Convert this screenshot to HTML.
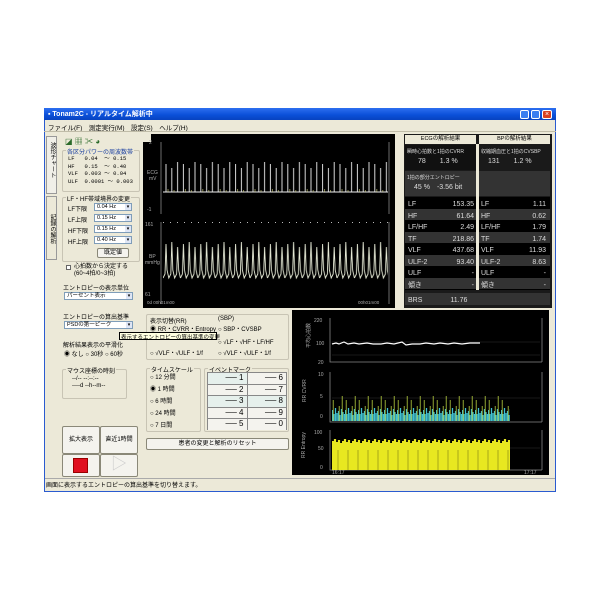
<!DOCTYPE html>
<html><head><meta charset="utf-8"><style>
*{margin:0;padding:0;box-sizing:border-box}
body{width:600px;height:600px;background:#fff;position:relative;overflow:hidden;font-family:"Liberation Sans","Noto Sans CJK JP",sans-serif;font-size:6px;color:#000}
.a{position:absolute}
.g{position:absolute;border:1px solid #c8c4b4;border-radius:2px}
.gt{position:absolute;top:-4px;left:3px;background:#ece9d8;padding:0 1px;font-size:6px;color:#1a3fa0;white-space:nowrap}
.sel{position:absolute;background:#fff;border:1px solid #7f9db9;height:8px;font-size:5.5px;line-height:7px;padding-left:2px}
.sel:after{content:"▾";position:absolute;right:0;top:0;width:6px;height:6px;background:#dfe6f5;font-size:5px;line-height:6px;text-align:center}
.btn{position:absolute;background:#f4f3ee;border:1px solid #8a8878;border-radius:2px;text-align:center;font-size:6px}
.t{position:absolute;white-space:nowrap;font-size:6px}
.r{color:#ddd;font-size:7px;position:absolute;white-space:nowrap}
.ev div{text-align:right;padding-right:3px;font-size:8px;line-height:10.5px}
</style></head><body>
<div class="a" style="left:44px;top:108px;width:512px;height:384px;background:#ece9d8;border:1px solid #2a5bd0"></div>
<div class="a" style="left:44px;top:108px;width:512px;height:12px;background:linear-gradient(#2e6ff0,#0a4fd8 60%,#0842c0)"></div>
<div class="t" style="left:48px;top:109px;color:#fff;font-weight:bold;font-size:7px">▪ Tonam2C - リアルタイム解析中</div>
<div class="a" style="left:520px;top:110px;width:9px;height:9px;background:#3a7ef0;border:1px solid #fff;border-radius:2px"></div>
<div class="a" style="left:531px;top:110px;width:9px;height:9px;background:#3a7ef0;border:1px solid #fff;border-radius:2px"></div>
<div class="a" style="left:542px;top:110px;width:10px;height:9px;background:#d84020;border:1px solid #fff;border-radius:2px;color:#fff;font-size:7px;line-height:7px;text-align:center">×</div>
<div class="t" style="left:48px;top:122px;font-size:6.5px">ファイル(F)　測定実行(M)　設定(S)　ヘルプ(H)</div>
<div class="a" style="left:44px;top:131px;width:512px;height:1px;background:#c0bca8"></div>
<div class="a" style="left:46px;top:136px;width:11px;height:58px;border:1px solid #999;background:#f0efe8"></div>
<div class="t" style="left:48px;top:142px;writing-mode:vertical-rl;font-size:6px">波形チャート</div>
<div class="a" style="left:46px;top:196px;width:11px;height:64px;border:1px solid #999;background:#ece9d8"></div>
<div class="t" style="left:48px;top:214px;writing-mode:vertical-rl;font-size:6px">記録の解析</div>
<div class="t" style="left:65px;top:136px;font-size:8px;color:#2a6a2a">◪ ▦ ✂ ◕</div>
<div class="g" style="left:62px;top:150px;width:78px;height:42px"><span class="gt">各区分パワーの周波数帯</span></div>
<div class="t" style="left:68px;top:155px;line-height:7.5px;font-family:'Liberation Mono',monospace;font-size:5.5px">LF&nbsp;&nbsp; 0.04&nbsp; ～ 0.15<br>HF&nbsp;&nbsp; 0.15&nbsp; ～ 0.40<br>VLF&nbsp; 0.003 ～ 0.04<br>ULF&nbsp; 0.0001 ～ 0.003</div>
<div class="g" style="left:62px;top:197px;width:78px;height:65px"><span class="gt" style="color:#000">LF・HF帯域境界の変更</span></div>
<div class="t" style="left:68px;top:204px">LF下限</div><div class="sel" style="left:94px;top:203px;width:38px">0.04 Hz</div>
<div class="t" style="left:68px;top:215px">LF上限</div><div class="sel" style="left:94px;top:214px;width:38px">0.15 Hz</div>
<div class="t" style="left:68px;top:226px">HF下限</div><div class="sel" style="left:94px;top:225px;width:38px">0.15 Hz</div>
<div class="t" style="left:68px;top:237px">HF上限</div><div class="sel" style="left:94px;top:236px;width:38px">0.40 Hz</div>
<div class="btn" style="left:97px;top:248px;width:32px;height:10px;line-height:8px">既定値</div>
<div class="a" style="left:66px;top:265px;width:5px;height:5px;border:1px solid #666;background:#fff"></div>
<div class="t" style="left:74px;top:264px;line-height:7px">心拍数から決定する<br>(60~4拍/0~3拍)</div>
<div class="t" style="left:63px;top:283px">エントロピーの表示単位</div>
<div class="sel" style="left:64px;top:292px;width:69px">パーセント表示</div>
<div class="t" style="left:63px;top:312px">エントロピーの算出基準</div>
<div class="sel" style="left:64px;top:321px;width:69px">PSDの第一ピーク</div>
<div class="t" style="left:63px;top:340px">解析結果表示の平滑化</div>
<div class="t" style="left:64px;top:349px">◉ なし ○ 30秒 ○ 60秒</div>
<div class="g" style="left:62px;top:369px;width:65px;height:30px"><span class="gt" style="color:#000">マウス座標の時刻</span></div>
<div class="t" style="left:72px;top:376px;line-height:7px">--/-- --:--:--<br>----d --h--m--</div>
<div class="btn" style="left:62px;top:426px;width:38px;height:28px;line-height:26px">拡大表示</div>
<div class="btn" style="left:100px;top:426px;width:38px;height:28px;line-height:26px">直近1時間</div>
<div class="btn" style="left:62px;top:454px;width:38px;height:23px"></div>
<div class="a" style="left:73px;top:458px;width:15px;height:15px;background:#e01020;border:1px solid #900"></div>
<div class="btn" style="left:100px;top:454px;width:38px;height:23px;color:#ccc;font-size:16px;line-height:20px">▷</div>
<div class="a" style="left:45px;top:478px;width:510px;height:1px;background:#aaa"></div>
<div class="t" style="left:46px;top:480px">画面に表示するエントロピーの算出基準を切り替えます。</div>
<svg class="a" style="left:143px;top:134px" width="252" height="174">
<defs>
<pattern id="ecg" x="20" y="28" width="17.4" height="31" patternUnits="userSpaceOnUse"><path d="M3 2 V30 M8.8 6 V30 M14.6 0 V30 M0 30 H17.4" stroke="#eee" stroke-width="0.9"/><path d="M5 27 V30 M11 28 V30" stroke="#dd8" stroke-width="0.6"/></pattern>
<pattern id="bp" x="20" y="106" width="17.4" height="40" patternUnits="userSpaceOnUse"><path d="M0 38 L2 34 L3 4 L4 30 L5.8 38 L7.8 34 L8.8 2 L9.8 30 L11.6 38 L13.6 34 L14.6 7 L15.6 30 L17.4 38" stroke="#e8ecd8" stroke-width="0.9" fill="none"/></pattern>
<pattern id="dot" x="20" y="0" width="7" height="2" patternUnits="userSpaceOnUse"><rect width="1" height="1" fill="#bbb"/></pattern>
</defs>
<rect width="252" height="174" fill="#000"/>
<rect x="0" y="0" width="8" height="8" fill="#ece9d8"/>
<rect x="20" y="7" width="225" height="1" fill="url(#dot)"/>
<rect x="20" y="88" width="225" height="1" fill="url(#dot)"/>
<rect x="20" y="28" width="225" height="31" fill="url(#ecg)"/>
<rect x="20" y="106" width="225" height="40" fill="url(#bp)"/>
<path d="M18 8 V80 M18 88 V170 M246 8 V80 M246 88 V170" stroke="#888" stroke-width="0.8"/>
<text x="6" y="10" fill="#aaa" font-size="5">2</text><text x="4" y="40" fill="#aaa" font-size="5">ECG</text><text x="6" y="46" fill="#aaa" font-size="5">mV</text><text x="4" y="77" fill="#aaa" font-size="5">-1</text>
<text x="2" y="92" fill="#aaa" font-size="5">161</text><text x="6" y="124" fill="#aaa" font-size="5">BP</text><text x="2" y="130" fill="#aaa" font-size="5">mmHg</text><text x="2" y="162" fill="#aaa" font-size="5">61</text>
<text x="4" y="170" fill="#aaa" font-size="4.5">0d 00h01m00</text><text x="215" y="170" fill="#aaa" font-size="4.5">00h01m00</text>
</svg>
<div class="a" style="left:404px;top:134px;width:148px;height:174px;background:#1a1a1a"></div>
<div class="a" style="left:405px;top:135px;width:71px;height:9px;background:#ece9d8;text-align:center;font-size:5.5px;line-height:9px">ECGの解析結果</div>
<div class="a" style="left:479px;top:135px;width:71px;height:9px;background:#ece9d8;text-align:center;font-size:5.5px;line-height:9px">BPの解析結果</div>
<div class="a" style="left:476px;top:144px;width:3px;height:146px;background:#ece9d8"></div>
<div class="a" style="left:405px;top:145px;width:71px;height:25px;background:#111"></div>
<div class="r" style="left:407px;top:148px;font-size:5px">瞬時心拍数と1拍のCVRR</div>
<div class="r" style="left:418px;top:156px">78　　1.3 %</div>
<div class="r" style="left:481px;top:148px;font-size:5px">収縮期血圧と1拍のCVSBP</div>
<div class="r" style="left:488px;top:156px">131　　1.2 %</div>
<div class="a" style="left:405px;top:171px;width:71px;height:25px;background:#333"></div>
<div class="a" style="left:479px;top:171px;width:71px;height:25px;background:#333"></div>
<div class="r" style="left:407px;top:174px;font-size:5px">1拍の部分エントロピー</div>
<div class="r" style="left:414px;top:182px">45 %　-3.56 bit</div>
<div class="a" style="left:405px;top:197px;width:145px;height:93px;background:#000"></div>
<div class="a" style="left:405px;top:209px;width:145px;height:11px;background:#333"></div>
<div class="a" style="left:405px;top:232px;width:145px;height:11px;background:#333"></div>
<div class="a" style="left:405px;top:255px;width:145px;height:11px;background:#333"></div>
<div class="a" style="left:405px;top:278px;width:145px;height:11px;background:#333"></div>
<div class="a" style="left:476px;top:197px;width:3px;height:93px;background:#ece9d8"></div>
<div class="r" style="left:408px;top:199px;line-height:11.5px">LF<br>HF<br>LF/HF<br>TF<br>VLF<br>ULF-2<br>ULF<br>傾き</div>
<div class="r" style="left:440px;top:199px;line-height:11.5px;text-align:right;width:34px">153.35<br>61.64<br>2.49<br>218.86<br>437.68<br>93.40<br>-<br>-</div>
<div class="r" style="left:481px;top:199px;line-height:11.5px">LF<br>HF<br>LF/HF<br>TF<br>VLF<br>ULF-2<br>ULF<br>傾き</div>
<div class="r" style="left:512px;top:199px;line-height:11.5px;text-align:right;width:34px">1.11<br>0.62<br>1.79<br>1.74<br>11.93<br>8.63<br>-<br>-</div>
<div class="a" style="left:405px;top:293px;width:145px;height:12px;background:#333"></div>
<div class="r" style="left:408px;top:295px">BRS　　　　11.76</div>
<div class="g" style="left:146px;top:314px;width:143px;height:46px"></div>
<div class="t" style="left:150px;top:316px">表示切替(RR)</div><div class="t" style="left:218px;top:316px">(SBP)</div>
<div class="t" style="left:150px;top:324px">◉ RR・CVRR・Entropy</div><div class="t" style="left:218px;top:324px">○ SBP・CVSBP</div>
<div class="a" style="left:119px;top:332px;width:98px;height:8px;background:#ffffe1;border:1px solid #000"></div>
<div class="t" style="left:121px;top:333px;font-size:5.5px">表示するエントロピーの算出基準の変更</div>
<div class="t" style="left:218px;top:337px">○ √LF・√HF・LF/HF</div>
<div class="t" style="left:150px;top:348px">○ √VLF・√ULF・1/f</div><div class="t" style="left:218px;top:348px">○ √VLF・√ULF・1/f</div>
<div class="g" style="left:146px;top:368px;width:55px;height:64px"><span class="gt" style="color:#000">タイムスケール</span></div>
<div class="t" style="left:150px;top:372px;line-height:12px">○ 12 分間<br>◉ 1 時間<br>○ 6 時間<br>○ 24 時間<br>○ 7 日間</div>
<div class="g" style="left:204px;top:368px;width:85px;height:64px"><span class="gt" style="color:#000">イベントマーク</span></div>
<div class="a ev" style="left:207px;top:372px;width:80px;height:58px;display:grid;grid-template-columns:1fr 1fr;gap:1px;background:#888;border:1px solid #888">
<div style="background:#e6f0ec">── 1</div><div style="background:#f4f3ee">── 6</div>
<div style="background:#f4f3ee">── 2</div><div style="background:#f4f3ee">── 7</div>
<div style="background:#e6f0ec">── 3</div><div style="background:#e6f0ec">── 8</div>
<div style="background:#f4f3ee">── 4</div><div style="background:#f4f3ee">── 9</div>
<div style="background:#f4f3ee">── 5</div><div style="background:#f4f3ee">── 0</div>
</div>
<div class="btn" style="left:146px;top:438px;width:143px;height:12px;line-height:10px">患者の変更と解析のリセット</div>
<svg class="a" style="left:292px;top:310px" width="257" height="165">
<defs>
<pattern id="cy" x="40" y="82" width="13" height="29" patternUnits="userSpaceOnUse"><path d="M0.5 29 V18 M2 29 V22 M3.5 29 V16 M5 29 V21 M6.5 29 V19 M8 29 V23 M9.5 29 V17 M11 29 V20 M12.5 29 V22" stroke="#40c0d0" stroke-width="1.3"/><path d="M1.2 29 V8 M7.2 29 V14 M10.2 29 V4" stroke="#b8d040" stroke-width="0.8"/></pattern>
<pattern id="yl" x="40" y="128" width="10" height="32" patternUnits="userSpaceOnUse"><path d="M1 32 V3 M3 32 V1 M5 32 V4 M7 32 V2 M9 32 V5" stroke="#e8e820" stroke-width="2.2"/><path d="M6 32 V12" stroke="#6a6a10" stroke-width="0.5"/></pattern>
</defs>
<rect width="257" height="165" fill="#000"/>
<path d="M38 8 V52 H250 M38 62 V112 H250 M38 120 V160 H250 M250 8 V52 M250 62 V112 M250 120 V160" stroke="#888" stroke-width="0.8" fill="none"/>
<path d="M40 32 H248 M40 45 H248 M40 88 H248 M40 138 H248" stroke="#333" stroke-width="0.6"/>
<path d="M40 34 l4 -1 l3 1 l5 -2 l4 2 l6 -1 l5 1 l8 -1 l6 1 l8 0 l6 -1 l7 1 l8 -2 l4 3 l6 -1 l8 0 l6 -1 l8 1 l6 -1 l8 1 l6 -1 l8 1 l8 -1 l10 0" stroke="#fff" stroke-width="1.2" fill="none"/>
<rect x="40" y="82" width="178" height="29" fill="url(#cy)"/>
<rect x="40" y="128" width="178" height="32" fill="url(#yl)"/>
<g fill="#aaa" font-size="5"><text x="22" y="12">220</text><text x="24" y="35">100</text><text x="26" y="54">20</text><text x="26" y="66">10</text><text x="28" y="88">5</text><text x="28" y="108">0</text><text x="22" y="124">100</text><text x="26" y="140">50</text><text x="28" y="159">0</text>
<text x="40" y="164">16:17</text><text x="232" y="164">17:17</text></g>
<g fill="#aaa" font-size="5"><text x="0" y="40" transform="rotate(-90 8 30)">平均心拍数</text><text x="0" y="90" transform="rotate(-90 8 84)">RR CVRR</text><text x="0" y="145" transform="rotate(-90 8 140)">RR Entropy</text></g>
</svg>
</body></html>
